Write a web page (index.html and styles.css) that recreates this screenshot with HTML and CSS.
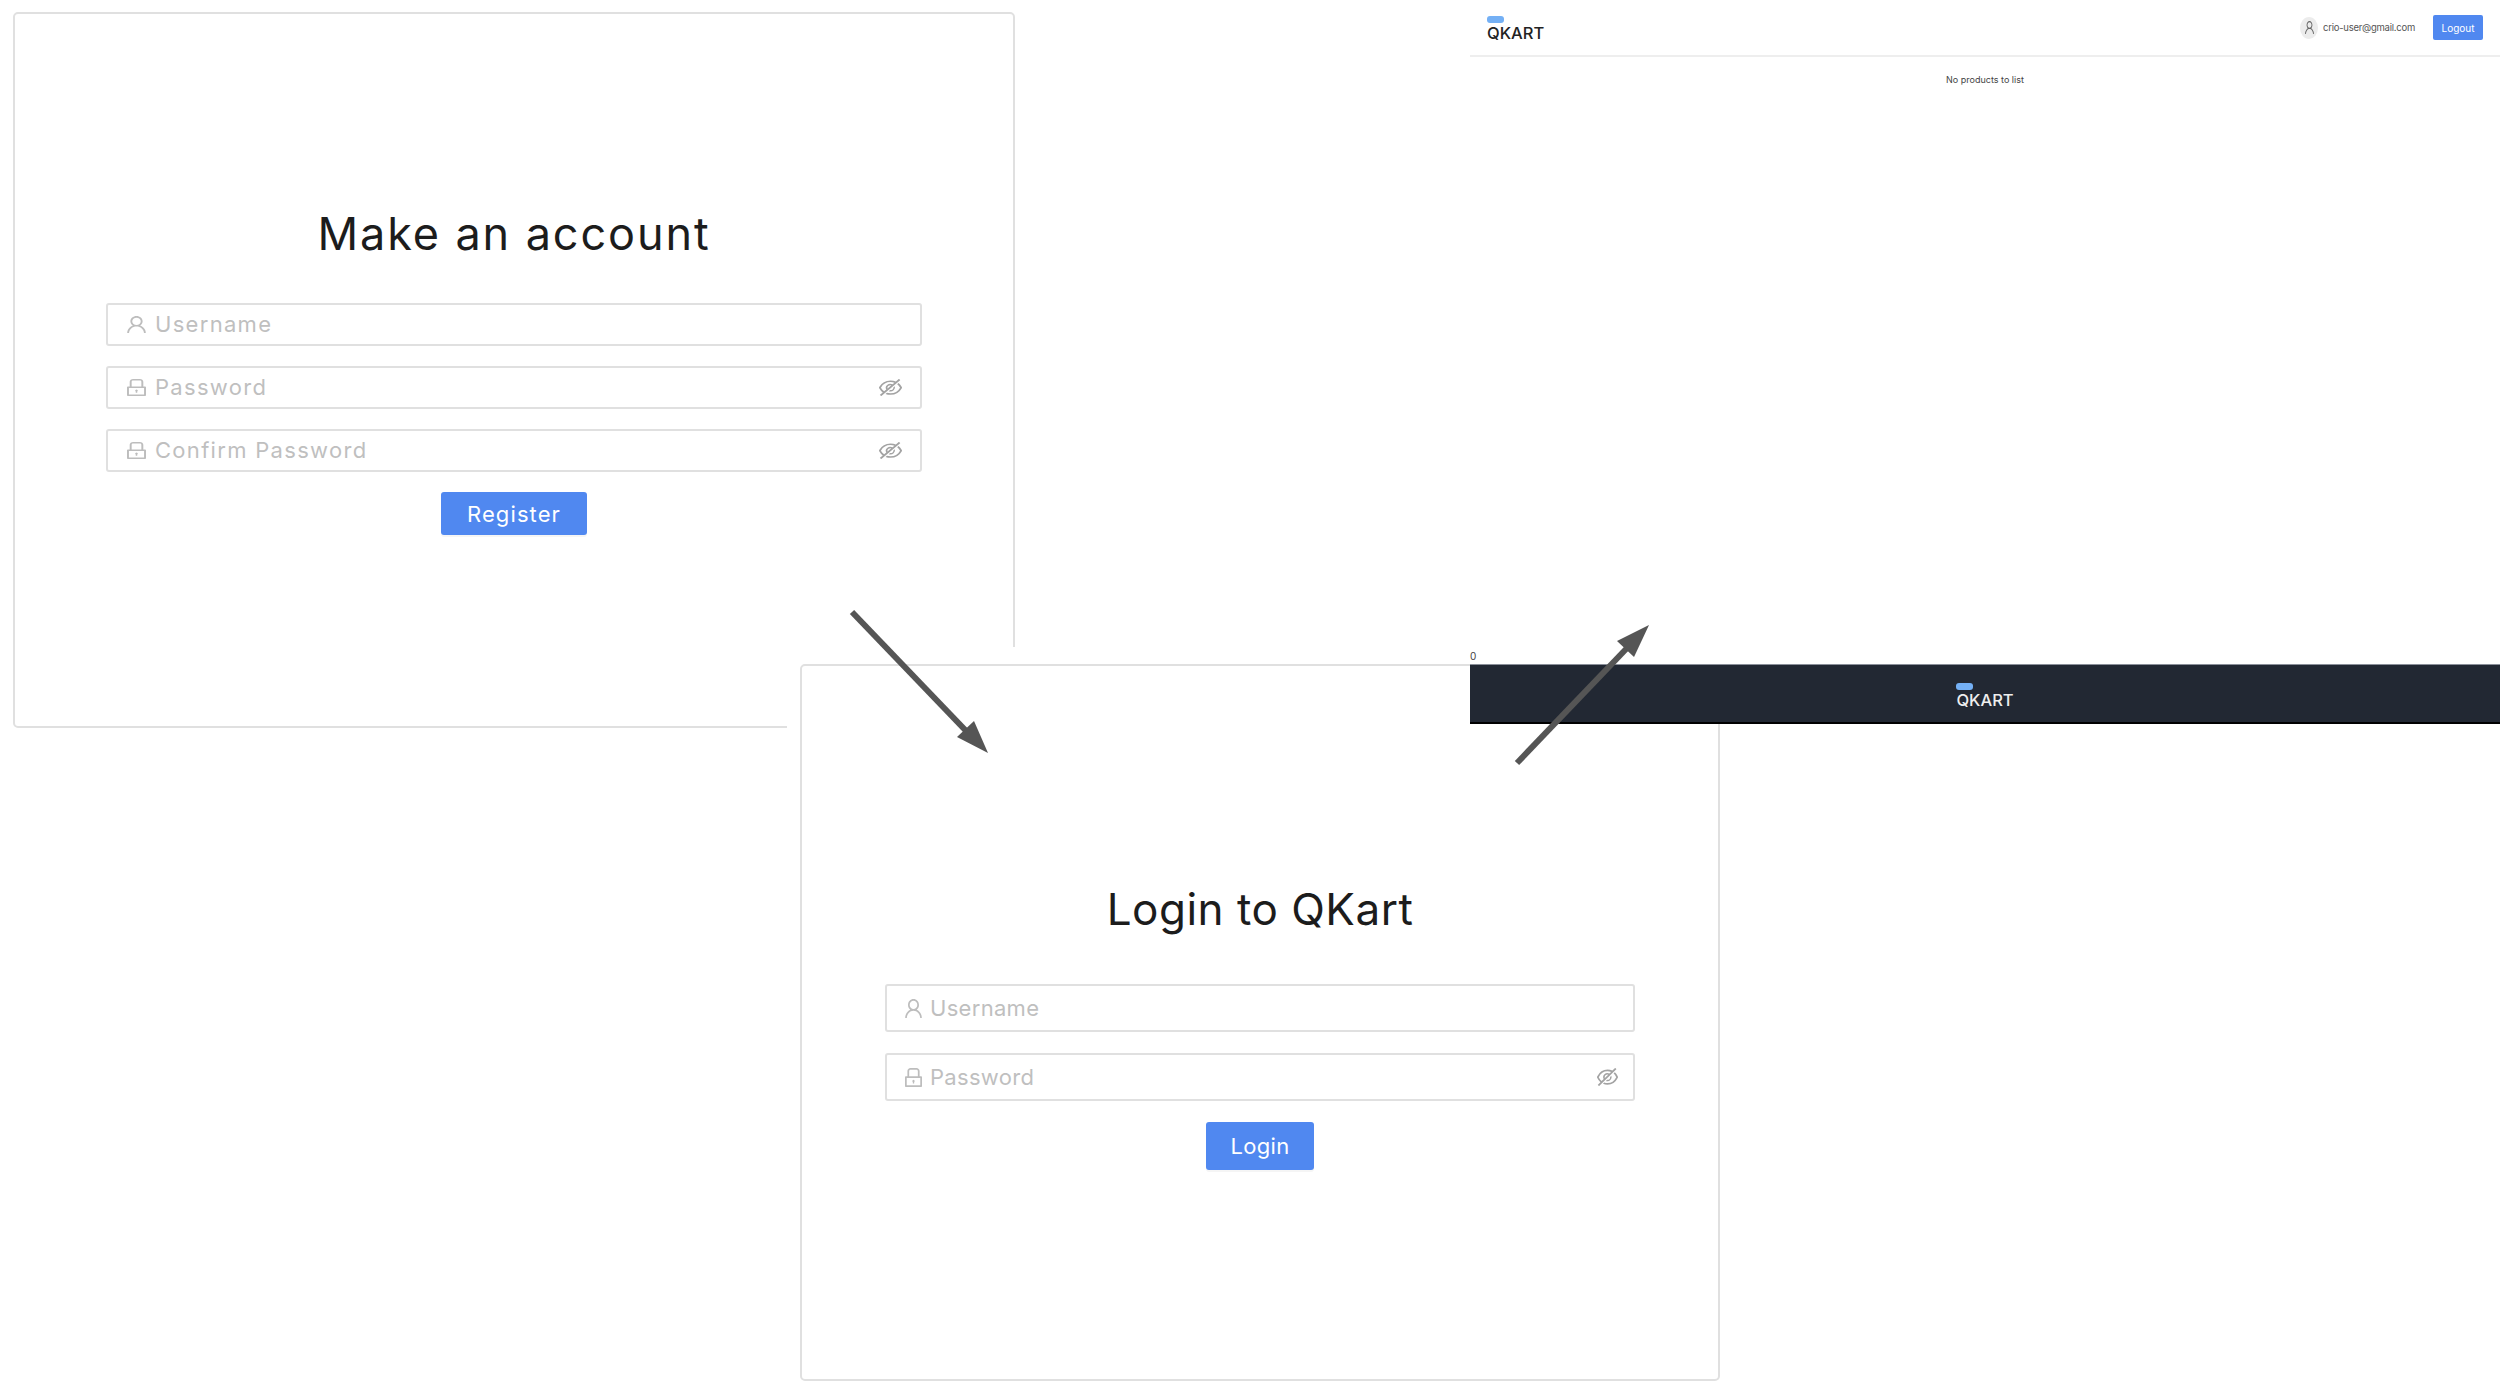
FILE: index.html
```html
<!DOCTYPE html>
<html lang="en">
<head>
    <meta charset="UTF-8">
    <title>QKart flow</title>
    <link rel="stylesheet" href="styles.css">
</head>
<body>
    <svg class="sprite" xmlns="http://www.w3.org/2000/svg">
        <symbol id="i-user" viewBox="128 112 768 800" preserveAspectRatio="none">
            <path d="M858.5 763.6a374 374 0 0 0-80.6-119.5 375.63 375.63 0 0 0-119.5-80.6c-.4-.2-.8-.3-1.2-.5C719.5 518 760 444.7 760 362c0-137-111-248-248-248S264 225 264 362c0 82.7 40.5 156 102.8 201.1-.4.2-.8.3-1.2.5-44.8 18.9-85 46-119.5 80.6a375.63 375.63 0 0 0-80.6 119.5A371.7 371.7 0 0 0 136 901.8a8 8 0 0 0 8 8.2h60c4.4 0 7.9-3.5 8-7.8 2-77.2 33-149.5 87.8-204.3 56.7-56.7 132-87.9 212.2-87.9s155.5 31.2 212.2 87.9C779 752.7 810 825 812 902.2c.1 4.4 3.6 7.8 8 7.8h60a8 8 0 0 0 8-8.2c-1-47.8-10.9-94.3-29.5-138.2zM512 534c-45.9 0-89.1-17.9-121.6-50.4S340 407.9 340 362c0-45.9 17.9-89.1 50.4-121.6S466.1 190 512 190s89.1 17.9 121.6 50.4S684 316.1 684 362c0 45.9-17.9 89.1-50.4 121.6S557.9 534 512 534z"/>
        </symbol>
        <symbol id="i-lock" viewBox="160 112 704 800" preserveAspectRatio="none">
            <path d="M832 464h-68V240c0-70.7-57.3-128-128-128H388c-70.7 0-128 57.3-128 128v224h-68c-17.7 0-32 14.3-32 32v384c0 17.7 14.3 32 32 32h640c17.7 0 32-14.3 32-32V496c0-17.7-14.3-32-32-32zM332 240c0-30.9 25.1-56 56-56h248c30.9 0 56 25.1 56 56v224H332V240zm460 600H232V536h560v304zM484 701v53c0 4.4 3.6 8 8 8h40c4.4 0 8-3.6 8-8v-53a48.01 48.01 0 1 0-56 0z"/>
        </symbol>
        <symbol id="i-eye-off" viewBox="76 120 872 772" preserveAspectRatio="none">
            <path d="M942.2 486.2Q889.47 375.11 816.7 305l-50.88 50.88C807.31 395.53 843.45 447.4 874.7 512 791.5 684.2 673.4 766 512 766q-72.67 0-133.87-22.38L323 798.75Q408 838 512 838q288.3 0 430.2-300.3a60.29 60.29 0 0 0 0-51.5zm-63.57-320.64L836 122.88a8 8 0 0 0-11.32 0L715.31 232.2Q624.86 186 512 186q-288.3 0-430.2 300.3a60.3 60.3 0 0 0 0 51.5q56.69 119.4 136.5 191.41L112.48 835a8 8 0 0 0 0 11.31L155.17 889a8 8 0 0 0 11.31 0l712.15-712.12a8 8 0 0 0 0-11.32zM149.3 512C232.6 339.8 350.7 258 512 258c54.54 0 104.13 9.36 149.12 28.39l-70.3 70.3a176 176 0 0 0-238.13 238.13l-83.42 83.42C223.1 637.49 183.3 582.28 149.3 512zm246.7 0a112.11 112.11 0 0 1 146.2-106.69L401.31 546.2A112 112 0 0 1 396 512z"/>
            <path d="M508 624c-3.46 0-6.87-.16-10.25-.47l-52.82 52.82a176.09 176.09 0 0 0 227.42-227.42l-52.82 52.82c.31 3.38.47 6.79.47 10.25a111.94 111.94 0 0 1-112 112z"/>
        </symbol>
    </svg>

    <!-- register screen -->
    <section class="card register-card">
        <h2 class="card-title">Make an account</h2>
        <div class="field">
            <svg class="field-icon"><use href="#i-user"/></svg>
            <span class="hint">Username</span>
        </div>
        <div class="field">
            <svg class="field-icon"><use href="#i-lock"/></svg>
            <span class="hint">Password</span>
            <svg class="eye-icon"><use href="#i-eye-off"/></svg>
        </div>
        <div class="field">
            <svg class="field-icon"><use href="#i-lock"/></svg>
            <span class="hint">Confirm Password</span>
            <svg class="eye-icon"><use href="#i-eye-off"/></svg>
        </div>
        <button class="primary-btn">Register</button>
    </section>

    <!-- login screen -->
    <section class="card login-card">
        <h2 class="card-title">Login to QKart</h2>
        <div class="field">
            <svg class="field-icon"><use href="#i-user"/></svg>
            <span class="hint">Username</span>
        </div>
        <div class="field">
            <svg class="field-icon"><use href="#i-lock"/></svg>
            <span class="hint">Password</span>
            <svg class="eye-icon"><use href="#i-eye-off"/></svg>
        </div>
        <button class="primary-btn">Login</button>
    </section>

    <!-- products screen -->
    <section class="shop">
        <header class="shop-header">
            <div class="logo">
                <span class="logo-pill"></span>
                <span class="logo-text">QKART</span>
            </div>
            <div class="user-box">
                <span class="avatar"><svg class="avatar-icon"><use href="#i-user"/></svg></span>
                <span class="user-email">crio-user@gmail.com</span>
                <button class="logout-btn">Logout</button>
            </div>
        </header>
        <main class="shop-main">
            <p class="empty-text">No products to list</p>
            <span class="count">0</span>
        </main>
        <footer class="shop-footer">
            <div class="logo logo-light">
                <span class="logo-pill"></span>
                <span class="logo-text">QKART</span>
            </div>
        </footer>
    </section>

    <!-- arrows between the screens -->
    <svg class="arrows" viewBox="0 0 2500 1388" xmlns="http://www.w3.org/2000/svg">
        <line x1="852" y1="612" x2="970" y2="735" stroke="#555" stroke-width="6"/>
        <polygon points="988,753 974,721 957,737" fill="#555"/>
        <line x1="1517" y1="763" x2="1628" y2="647" stroke="#555" stroke-width="6"/>
        <polygon points="1649,625 1617,641 1634,657" fill="#555"/>
    </svg>
</body>
</html>
```

FILE: styles.css
```css
:root {
    --blue: #5088f0;
    --line: #e0e0e0;
    --hint: #bfbfbf;
    --dark: #222833;
}

html, body {
    margin: 0;
    padding: 0;
}

body {
    position: relative;
    width: 2500px;
    height: 1388px;
    overflow: hidden;
    background: #fff;
    font-family: Inter, "Liberation Sans", sans-serif;
    color: #222;
}

.sprite {
    display: none;
}

.card {
    position: absolute;
    box-sizing: border-box;
    display: flex;
    flex-direction: column;
    align-items: center;
    background: #fff;
    border: 2px solid var(--line);
    border-radius: 5px;
}

.register-card {
    left: 13px;
    top: 12px;
    width: 1002px;
    height: 716px;
    padding: 187px 91px 0;
}

/* the white offset hides the edges of the card behind */
.login-card {
    left: 800px;
    top: 664px;
    width: 920px;
    height: 717px;
    padding: 210px 83px 0;
    box-shadow: -13px -17px 0 0 #fff;
}

.card-title {
    margin: 0;
    font-weight: 400;
    color: #1c1c1c;
    white-space: nowrap;
}

.register-card .card-title {
    font-size: 45px;
    line-height: 66px;
    letter-spacing: 1.9px;
    margin-bottom: 36px;
}

.login-card .card-title {
    font-size: 44px;
    line-height: 66px;
    letter-spacing: 0.5px;
    margin-bottom: 42px;
}

.field {
    box-sizing: border-box;
    width: 100%;
    display: flex;
    align-items: center;
    border: 2px solid var(--line);
    border-radius: 3px;
}

.register-card .field {
    height: 43px;
    margin-bottom: 20px;
    padding: 0 18px 0 19px;
}

.login-card .field {
    height: 48px;
    margin-bottom: 21px;
    padding: 0 15px 0 18px;
}

.hint {
    flex: 1;
    color: var(--hint);
    white-space: nowrap;
}

.register-card .hint {
    font-size: 22px;
    line-height: 26px;
    padding-bottom: 1px;
    letter-spacing: 1.3px;
}

.login-card .hint {
    font-size: 22px;
    letter-spacing: 0.3px;
}

.field-icon {
    fill: #bdbdbd;
    flex: none;
}

.register-card .field-icon {
    width: 19px;
    height: 17px;
    margin-right: 9px;
}

.login-card .field-icon {
    width: 17px;
    height: 19px;
    margin-right: 8px;
}

.eye-icon {
    fill: #a3a3a3;
    flex: none;
}

.register-card .eye-icon {
    width: 23px;
    height: 17px;
}

.login-card .eye-icon {
    width: 21px;
    height: 18px;
}

.primary-btn {
    background: var(--blue);
    color: #fff;
    border: none;
    border-radius: 3px;
    font-family: inherit;
    box-shadow: 0 2px 0 rgba(0,0,0,0.04);
}

.register-card .primary-btn {
    width: 146px;
    height: 43px;
    font-size: 22px;
    letter-spacing: 1.1px;
}

.login-card .primary-btn {
    width: 108px;
    height: 48px;
    font-size: 22px;
    letter-spacing: 0.3px;
}

/* products window */
.shop {
    position: absolute;
    left: 1470px;
    top: 0;
    width: 1030px;
    height: 724px;
    display: flex;
    flex-direction: column;
    background: #fff;
}

.shop-header {
    box-sizing: border-box;
    height: 57px;
    flex: none;
    display: flex;
    justify-content: space-between;
    align-items: center;
    padding: 0 17px;
    border-bottom: 2px solid #eee;
}

.logo {
    display: flex;
    flex-direction: column;
    align-items: flex-start;
}

.logo-pill {
    width: 17px;
    height: 7px;
    border-radius: 3px;
    background: #74b0f5;
}

.shop-header .logo {
    padding-top: 4px;
}

.logo-text {
    font-size: 16.5px;
    line-height: 20px;
    font-weight: 500;
}

.user-box {
    display: flex;
    align-items: center;
}

.avatar {
    width: 18px;
    height: 22px;
    border-radius: 50%;
    background: #ececec;
    display: flex;
    align-items: center;
    justify-content: center;
}

.avatar-icon {
    width: 9px;
    height: 13px;
    fill: #666;
}

.user-email {
    margin-left: 5px;
    font-size: 9.5px;
    letter-spacing: -0.25px;
    color: #555;
}

.logout-btn {
    box-sizing: border-box;
    width: 50px;
    height: 25px;
    margin-left: 18px;
    padding: 0;
    border: none;
    border-radius: 2px;
    background: var(--blue);
    color: #fff;
    font-family: inherit;
    font-size: 10px;
}

.shop-main {
    flex: 1;
    display: flex;
    flex-direction: column;
    justify-content: space-between;
}

.empty-text {
    margin: 16px 0 0;
    text-align: center;
    font-size: 9px;
    line-height: 14px;
    color: #444;
}

.count {
    font-size: 10px;
    line-height: 12px;
    margin-bottom: 2px;
    color: #444;
}

.shop-footer {
    box-sizing: border-box;
    height: 60px;
    flex: none;
    display: flex;
    justify-content: center;
    align-items: center;
    padding-top: 6px;
    background: var(--dark);
    border-top: 1px solid #8a8f99;
    border-bottom: 2px solid #000;
}

.logo-light .logo-text {
    color: #eee;
}

.arrows {
    position: absolute;
    left: 0;
    top: 0;
    width: 2500px;
    height: 1388px;
    pointer-events: none;
}
```
